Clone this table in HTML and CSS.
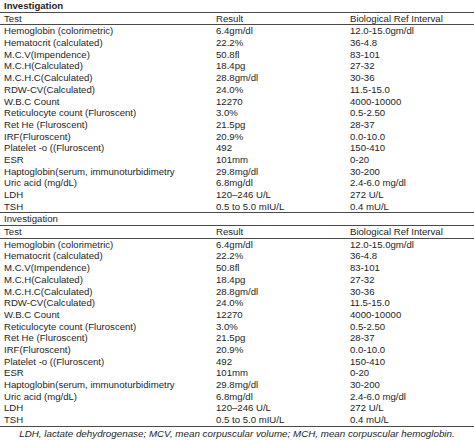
FILE: index.html
```html
<!DOCTYPE html>
<html>
<head>
<meta charset="utf-8">
<link rel="stylesheet" href="styles.css">
</head>
<body>
<div class="report">
  <div class="row ruled"><span class="bold">Investigation</span></div>
  <div class="row ruled"><span>Test</span><span>Result</span><span>Biological Ref Interval</span></div>
  <div class="row"><span>Hemoglobin (colorimetric)</span><span>6.4gm/dl</span><span>12.0-15.0gm/dl</span></div>
  <div class="row"><span>Hematocrit (calculated)</span><span>22.2%</span><span>36-4.8</span></div>
  <div class="row"><span>M.C.V(Impendence)</span><span>50.8fl</span><span>83-101</span></div>
  <div class="row"><span>M.C.H(Calculated)</span><span>18.4pg</span><span>27-32</span></div>
  <div class="row"><span>M.C.H.C(Calculated)</span><span>28.8gm/dl</span><span>30-36</span></div>
  <div class="row"><span>RDW-CV(Calculated)</span><span>24.0%</span><span>11.5-15.0</span></div>
  <div class="row"><span>W.B.C Count</span><span>12270</span><span>4000-10000</span></div>
  <div class="row"><span>Reticulocyte count (Fluroscent)</span><span>3.0%</span><span>0.5-2.50</span></div>
  <div class="row"><span>Ret He (Fluroscent)</span><span>21.5pg</span><span>28-37</span></div>
  <div class="row"><span>IRF(Fluroscent)</span><span>20.9%</span><span>0.0-10.0</span></div>
  <div class="row"><span>Platelet -o ((Fluroscent)</span><span>492</span><span>150-410</span></div>
  <div class="row"><span>ESR</span><span>101mm</span><span>0-20</span></div>
  <div class="row"><span>Haptoglobin(serum, immunoturbidimetry</span><span>29.8mg/dl</span><span>30-200</span></div>
  <div class="row"><span>Uric acid (mg/dL)</span><span>6.8mg/dl</span><span>2.4-6.0 mg/dl</span></div>
  <div class="row"><span>LDH</span><span>120–246 U/L</span><span>272 U/L</span></div>
  <div class="row ruled"><span>TSH</span><span>0.5 to 5.0 mIU/L</span><span>0.4 mU/L</span></div>
  <div class="row ruled"><span>Investigation</span></div>
  <div class="row ruled"><span>Test</span><span>Result</span><span>Biological Ref Interval</span></div>
  <div class="row"><span>Hemoglobin (colorimetric)</span><span>6.4gm/dl</span><span>12.0-15.0gm/dl</span></div>
  <div class="row"><span>Hematocrit (calculated)</span><span>22.2%</span><span>36-4.8</span></div>
  <div class="row"><span>M.C.V(Impendence)</span><span>50.8fl</span><span>83-101</span></div>
  <div class="row"><span>M.C.H(Calculated)</span><span>18.4pg</span><span>27-32</span></div>
  <div class="row"><span>M.C.H.C(Calculated)</span><span>28.8gm/dl</span><span>30-36</span></div>
  <div class="row"><span>RDW-CV(Calculated)</span><span>24.0%</span><span>11.5-15.0</span></div>
  <div class="row"><span>W.B.C Count</span><span>12270</span><span>4000-10000</span></div>
  <div class="row"><span>Reticulocyte count (Fluroscent)</span><span>3.0%</span><span>0.5-2.50</span></div>
  <div class="row"><span>Ret He (Fluroscent)</span><span>21.5pg</span><span>28-37</span></div>
  <div class="row"><span>IRF(Fluroscent)</span><span>20.9%</span><span>0.0-10.0</span></div>
  <div class="row"><span>Platelet -o ((Fluroscent)</span><span>492</span><span>150-410</span></div>
  <div class="row"><span>ESR</span><span>101mm</span><span>0-20</span></div>
  <div class="row"><span>Haptoglobin(serum, immunoturbidimetry</span><span>29.8mg/dl</span><span>30-200</span></div>
  <div class="row"><span>Uric acid (mg/dL)</span><span>6.8mg/dl</span><span>2.4-6.0 mg/dl</span></div>
  <div class="row"><span>LDH</span><span>120–246 U/L</span><span>272 U/L</span></div>
  <div class="row ruled"><span>TSH</span><span>0.5 to 5.0 mIU/L</span><span>0.4 mU/L</span></div>
</div>
<p class="caption">LDH, lactate dehydrogenase; MCV, mean corpuscular volume; MCH, mean corpuscular hemoglobin.</p>
</body>
</html>
```

FILE: styles.css
```css
html, body {
  margin: 0;
  padding: 0;
  background: #ffffff;
}
body {
  font-family: "Liberation Sans", Arial, sans-serif;
  font-size: 9.6px;
  color: #1e1e1e;
  width: 474px;
  overflow: hidden;
}
.report {
  width: 474px;
}
.row {
  display: grid;
  grid-template-columns: 212px 134px 128px;
  height: 11.7px;
  line-height: 11.7px;
  white-space: nowrap;
}
.row > span {
  padding-left: 4px;
}
.row.ruled {
  border-bottom: 1px solid #4a4a4a;
}
.bold {
  font-weight: bold;
}
.caption {
  margin: 0;
  text-align: center;
  font-style: italic;
  font-size: 9.8px;
  line-height: 13px;
}
```
